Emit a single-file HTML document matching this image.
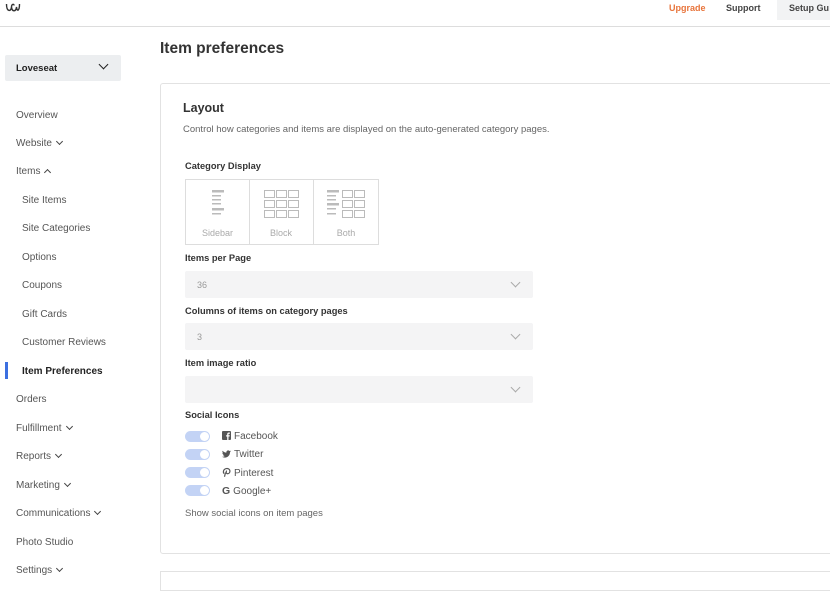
<!DOCTYPE html>
<html><head><style>
*{margin:0;padding:0;box-sizing:border-box}
body{width:830px;height:575px;overflow:hidden;background:#fff;font-family:"Liberation Sans",sans-serif;color:#333;position:relative}
.a{position:absolute;white-space:nowrap}
.nav{position:absolute;left:16px;font-size:10px;color:#555}
.sub{left:22px}
.chev{display:inline-block;width:5px;height:5px;border-right:1.5px solid #444;border-bottom:1.5px solid #444;transform:rotate(45deg);margin-left:5px;position:relative;top:-2px}
.up{transform:rotate(-135deg);top:1px}
.lbl{position:absolute;left:185px;font-size:9.3px;font-weight:bold;color:#333}
.sel{position:absolute;left:185px;width:348px;height:27px;background:#f4f4f5;border-radius:2px;font-size:9px;color:#999;padding:9px 12px}
.sel:after{content:"";position:absolute;right:14px;top:8px;width:6px;height:6px;border-right:1.3px solid #aaa;border-bottom:1.3px solid #aaa;transform:rotate(45deg)}
.tg{position:absolute;left:185px;width:25px;height:11px;border-radius:6px;background:#c3d3f5}
.tg:after{content:"";position:absolute;right:1px;top:1px;width:9px;height:9px;border-radius:50%;background:#fff}
.st{position:absolute;left:222px;font-size:10px;color:#555}
.st svg{vertical-align:-1px;margin-right:3px}
.tile{position:absolute;top:179px;width:65px;height:66px;border:1px solid #ddd;font-size:9px;color:#aaa;text-align:center}
.tile span{position:absolute;bottom:6px;left:0;right:0}
</style></head><body>
<div class="a" style="left:0;top:0;width:830px;height:27px;border-bottom:1.5px solid #ddd"></div>
<svg class="a" style="left:5px;top:2px" width="16" height="11" viewBox="0 0 16 11"><path d="M1.5 2 C1.5 10 6 10 6.5 5 C7 10 11 10 11.5 5 C12 10 14.5 9 14.5 2 M6.5 5 C6.5 2 9 1.5 9 3.5" fill="none" stroke="#333" stroke-width="1.4"/></svg>
<div class="a" style="left:669px;top:3px;font-size:9px;font-weight:bold;color:#e8743b">Upgrade</div>
<div class="a" style="left:726px;top:3px;font-size:9px;font-weight:bold;color:#444">Support</div>
<div class="a" style="left:777px;top:0;width:53px;height:20px;background:#f2f3f4"></div>
<div class="a" style="left:789px;top:3px;font-size:9px;font-weight:bold;color:#444">Setup Gu</div>

<div class="a" style="left:5px;top:55px;width:116px;height:26px;background:#eceef0;border-radius:2px"></div>
<div class="a" style="left:16px;top:63px;font-size:9.5px;font-weight:bold;color:#222">Loveseat</div>
<div class="a" style="left:100px;top:61px;width:7px;height:7px;border-right:1.8px solid #222;border-bottom:1.8px solid #222;transform:rotate(45deg)"></div>

<div class="nav" style="top:110px">Overview</div>
<div class="nav" style="top:138px">Website<i class="chev"></i></div>
<div class="nav" style="top:166px">Items<i class="chev up"></i></div>
<div class="nav sub" style="top:195px">Site Items</div>
<div class="nav sub" style="top:223px">Site Categories</div>
<div class="nav sub" style="top:252px">Options</div>
<div class="nav sub" style="top:280px">Coupons</div>
<div class="nav sub" style="top:309px">Gift Cards</div>
<div class="nav sub" style="top:337px">Customer Reviews</div>
<div class="a" style="left:5px;top:362px;width:2.5px;height:17px;background:#3c6fe0"></div>
<div class="nav sub" style="top:366px;font-weight:bold;color:#222">Item Preferences</div>
<div class="nav" style="top:394px">Orders</div>
<div class="nav" style="top:423px">Fulfillment<i class="chev"></i></div>
<div class="nav" style="top:451px">Reports<i class="chev"></i></div>
<div class="nav" style="top:480px">Marketing<i class="chev"></i></div>
<div class="nav" style="top:508px">Communications<i class="chev"></i></div>
<div class="nav" style="top:537px">Photo Studio</div>
<div class="nav" style="top:565px">Settings<i class="chev"></i></div>

<div class="a" style="left:160px;top:40px;font-size:15.5px;font-weight:bold;color:#333">Item preferences</div>
<div class="a" style="left:160px;top:83px;width:680px;height:471px;border:1px solid #e2e2e2;border-radius:3px"></div>
<div class="a" style="left:160px;top:571px;width:680px;height:20px;border:1px solid #e2e2e2"></div>
<div class="a" style="left:183px;top:101px;font-size:12.5px;font-weight:bold;color:#333">Layout</div>
<div class="a" style="left:183px;top:124px;font-size:9.5px;color:#666">Control how categories and items are displayed on the auto-generated category pages.</div>
<div class="lbl" style="top:161px">Category Display</div>

<div class="tile" style="left:185px"><svg width="63" height="50"><g fill="#bbb"><rect x="26" y="10" width="12" height="2.5"/><rect x="26" y="15" width="9" height="1.5"/><rect x="26" y="19" width="9" height="1.5"/><rect x="26" y="23" width="9" height="1.5"/><rect x="26" y="28" width="12" height="2.5"/><rect x="26" y="33" width="9" height="1.5"/></g></svg><span>Sidebar</span></div>
<div class="tile" style="left:249px;border-left:none"><svg width="63" height="50"><g fill="none" stroke="#bbb" stroke-width="1"><rect x="14.5" y="10.5" width="10" height="7"/><rect x="26.5" y="10.5" width="10" height="7"/><rect x="38.5" y="10.5" width="10" height="7"/><rect x="14.5" y="20.5" width="10" height="7"/><rect x="26.5" y="20.5" width="10" height="7"/><rect x="38.5" y="20.5" width="10" height="7"/><rect x="14.5" y="30.5" width="10" height="7"/><rect x="26.5" y="30.5" width="10" height="7"/><rect x="38.5" y="30.5" width="10" height="7"/></g></svg><span>Block</span></div>
<div class="tile" style="left:314px;border-left:none"><svg width="63" height="50"><g fill="#bbb"><rect x="12" y="10" width="12" height="2.5"/><rect x="12" y="15" width="9" height="1.5"/><rect x="12" y="19" width="9" height="1.5"/><rect x="12" y="23" width="12" height="2.5"/><rect x="12" y="28" width="9" height="1.5"/><rect x="12" y="33" width="9" height="1.5"/></g><g fill="none" stroke="#bbb"><rect x="27.5" y="10.5" width="10" height="7"/><rect x="39.5" y="10.5" width="10" height="7"/><rect x="27.5" y="20.5" width="10" height="7"/><rect x="39.5" y="20.5" width="10" height="7"/><rect x="27.5" y="30.5" width="10" height="7"/><rect x="39.5" y="30.5" width="10" height="7"/></g></svg><span>Both</span></div>

<div class="lbl" style="top:253px">Items per Page</div>
<div class="sel" style="top:271px">36</div>
<div class="lbl" style="top:306px">Columns of items on category pages</div>
<div class="sel" style="top:323px">3</div>
<div class="lbl" style="top:358px">Item image ratio</div>
<div class="sel" style="top:376px"></div>
<div class="lbl" style="top:410px">Social Icons</div>
<div class="tg" style="top:431px"></div><div class="st" style="top:431px"><svg width="9" height="9" viewBox="0 0 9 9"><rect width="9" height="9" rx="1" fill="#555"/><path d="M6.5 9V5.5H7.6L7.8 4.2H6.5V3.4C6.5 3 6.6 2.7 7.2 2.7H7.9V1.6C7.6 1.5 7.2 1.5 6.8 1.5 5.9 1.5 5.2 2 5.2 3.1V4.2H4.1V5.5H5.2V9Z" fill="#fff"/></svg>Facebook</div>
<div class="tg" style="top:449px"></div><div class="st" style="top:449px"><svg width="9" height="8" viewBox="0 0 10 8"><path d="M10 1C9.6 1.2 9.3 1.3 8.8 1.3 9.2 1.1 9.5.7 9.7.2 9.3.4 8.9.6 8.4.7 7.6-.2 6.2-.2 5.4.6 4.9 1.1 4.7 1.8 4.9 2.5 3.2 2.4 1.7 1.6.7.4.1 1.3.4 2.5 1.3 3.1 1 3.1.7 3 .4 2.9.4 3.8 1.1 4.7 2 4.9 1.7 5 1.4 5 1.1 4.9 1.4 5.7 2.1 6.2 3 6.2 2.2 6.9 1.1 7.2 0 7.1 1 7.7 2 8 3.1 8 6.8 8 8.9 4.9 8.9 2.2V2C9.4 1.7 9.7 1.3 10 1Z" fill="#555"/></svg>Twitter</div>
<div class="tg" style="top:467px"></div><div class="st" style="top:467px"><svg width="9" height="10" viewBox="0 0 9 10"><path d="M3.5 5.5 2.5 9.8M2.2 6.5C.9 5.6 1 2.3 4.3 1.6 7.3 1 8.4 3.6 7.7 5.3 7 7 5.2 7 4.4 6.2 3.8 5.6 4.4 4.2 4.6 3.6" fill="none" stroke="#555" stroke-width="1.2"/></svg>Pinterest</div>
<div class="tg" style="top:485px"></div><div class="st" style="top:485px"><span style="font-weight:bold;font-size:10.5px;color:#555;margin-right:3px">G</span>Google+</div>
<div class="a" style="left:185px;top:508px;font-size:9.5px;color:#666">Show social icons on item pages</div>
</body></html>
